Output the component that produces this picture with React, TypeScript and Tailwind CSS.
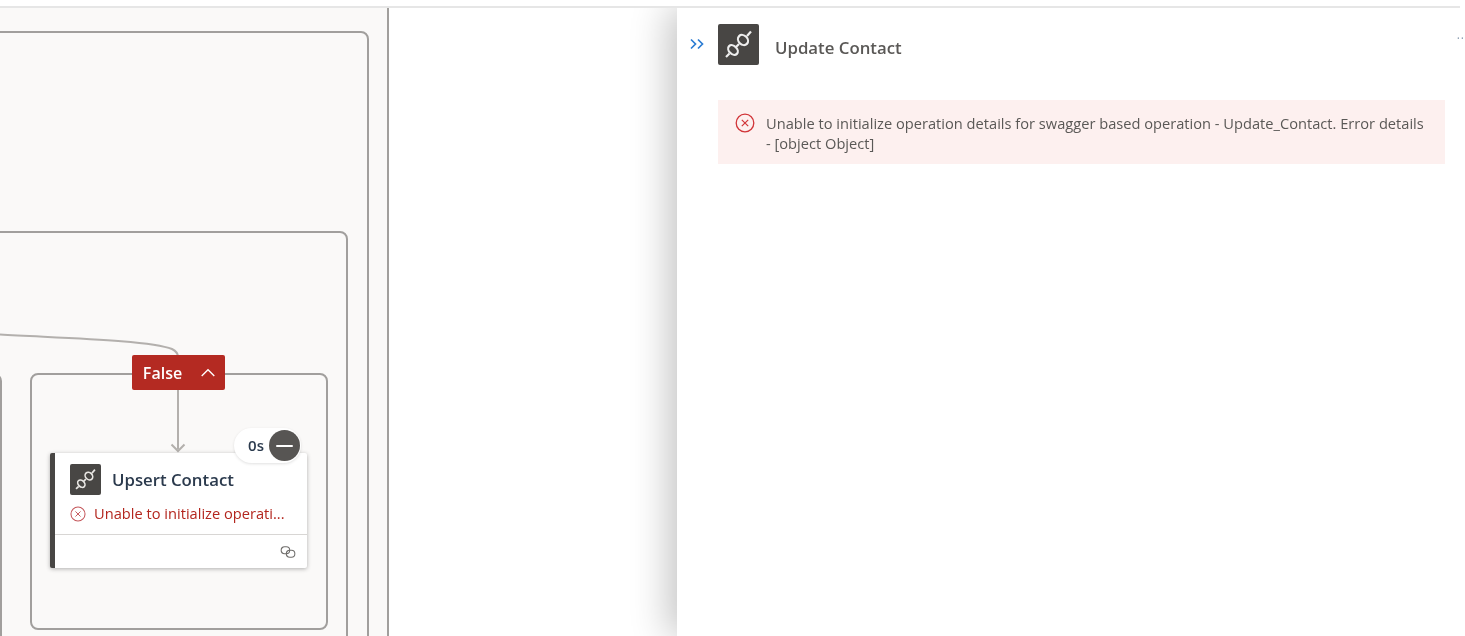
const font = "[font-family:'Open_Sans','Noto_Sans',sans-serif]"

function PlugIcon({ className }: { className: string }) {
  return (
    <svg viewBox="0 0 41 41" fill="none" stroke="currentColor" strokeWidth="2.2" className={className}>
      <path d="M8 33l3.500-3.500" />
      <ellipse cx="15" cy="26" rx="4" ry="5.500" transform="rotate(-45 15 26)" />
      <path d="M18 23l3-3" />
      <ellipse cx="25" cy="16" rx="4.500" ry="5.500" transform="rotate(-45 25 16)" />
      <path d="M29 12l4-4.500" />
    </svg>
  )
}

function ErrorIcon({ className }: { className: string }) {
  return (
    <svg viewBox="0 0 20 20" fill="none" stroke="currentColor" className={className}>
      <circle cx="10" cy="10" r="8.8" strokeWidth="1.3" />
      <path d="M6.8 6.8l6.4 6.4M13.2 6.8l-6.4 6.4" strokeWidth="1.2" />
    </svg>
  )
}

function Canvas() {
  return (
    <div className="relative h-full w-[389px] shrink-0 overflow-hidden border-r-2 border-[#a19f9d] bg-[#faf9f8]">
      {/* nested scope boxes run off the canvas */}
      <div className="absolute left-[-40px] top-[23px] h-[700px] w-[409px] rounded-lg border-2 border-[#a19f9d]" />
      <div className="absolute left-[-40px] top-[223px] h-[500px] w-[388px] rounded-lg border-2 border-[#a19f9d]" />
      <div className="absolute left-[-300px] top-[365px] h-[300px] w-[302px] rounded-lg border-2 border-[#a19f9d]" />
      <div className="absolute left-[30px] top-[365px] h-[257px] w-[298px] rounded-lg border-2 border-[#a19f9d]" />

      <svg className="absolute left-0 top-[319px] h-[130px] w-[200px]" viewBox="0 0 200 130" fill="none" stroke="#b3b0ad" strokeWidth="2">
        <path d="M0 7.5C60 11 150 13 172 22Q178 25 178 30V122" />
        <path d="M171.5 117.5l6.5 6.5 6.5-6.5" />
      </svg>

      <div className="absolute left-[132px] top-[347px] flex h-[35px] w-[93px] items-center justify-center gap-[18px] rounded-[2px] bg-[#b42a22] pl-[2px] text-[16px] font-semibold text-white">
        False
        <svg viewBox="0 0 16 10" fill="none" stroke="currentColor" strokeWidth="1.5" className="h-[9px] w-[16px]">
          <path d="M1 9l7-7 7 7" />
        </svg>
      </div>

      <div className="absolute left-[50px] top-[445px] w-[257px] rounded-[2px] border-l-[5px] border-[#484644] bg-white shadow-[0_1px_4px_rgba(0,0,0,0.3)]">
        <div className="flex items-center gap-[11px] pl-[15px] pt-[11px]">
          <div className="flex h-[31px] w-[31px] items-center justify-center rounded-[2px] bg-[#484644] text-[#e8e6e3]">
            <PlugIcon className="h-[31px] w-[31px]" />
          </div>
          <span className="text-[16.8px] font-semibold text-[#2b3a4d]">Upsert Contact</span>
        </div>
        <div className="flex h-[40px] items-center gap-[8px] border-b border-[#d8d6d4] pb-[2px] pl-[15px] text-[14.65px] text-[#b3261e]">
          <ErrorIcon className="h-[16px] w-[16px] shrink-0 text-[#c4565a]" />
          Unable to initialize operati...
        </div>
        <div className="flex h-[33px] items-center justify-end pr-[11px] text-[#6e6c6a]">
          <svg viewBox="0 0 18 14" fill="none" stroke="currentColor" strokeWidth="1.2" className="h-[12px] w-[16px]">
            <rect x="1" y="1" width="10" height="8" rx="4" />
            <rect x="7" y="5" width="10" height="8" rx="4" />
          </svg>
        </div>
      </div>

      <div className="absolute left-[234px] top-[420px] flex h-[35px] w-[67px] items-center justify-end rounded-full bg-white pr-[1px] shadow-[0_1px_3px_rgba(0,0,0,0.12)]">
        <span className="mr-[5px] text-[15px] font-semibold text-[#2b3a4d]">0s</span>
        <div className="flex h-[31px] w-[31px] items-center justify-center rounded-full bg-[#575553]">
          <div className="h-[2px] w-[17px] rounded-full bg-white" />
        </div>
      </div>
    </div>
  )
}

function DetailsPanel() {
  return (
    <div className="relative flex-1 bg-white pr-[20px] shadow-[-8px_0_36px_rgba(0,0,0,0.24)]">
      <div className="flex h-[57px] items-center pl-[12px] pt-[16px]">
        <svg viewBox="0 0 16 12" fill="none" stroke="#2b7cd3" strokeWidth="1.7" className="mt-[-1px] h-[12px] w-[17px]">
          <path d="M1.5 1.5l4.5 4.5-4.500 4.500M8.500 1.500l4.500 4.500-4.500 4.500" />
        </svg>
        <div className="ml-[12px] flex h-[41px] w-[41px] items-center justify-center rounded-[2px] bg-[#484644] text-[#eeeeee]">
          <PlugIcon className="h-[41px] w-[41px]" />
        </div>
        <span className="ml-[16px] mt-[7px] text-[16.8px] font-semibold text-[#5a5856]">Update Contact</span>
        <span className="absolute right-0 top-[25px] text-[12px] leading-none tracking-[1px] text-[#8a9bb0]">··</span>
      </div>
      <div className="ml-[41px] mt-[35px] flex h-[64px] gap-[11px] bg-[#fdf0ef] pl-[17px] pr-[20px] pt-[13px] text-[14.65px] leading-[20px] text-[#5a5856]">
        <ErrorIcon className="h-[20px] w-[20px] shrink-0 text-[#d13438]" />
        <p>Unable to initialize operation details for swagger based operation - Update_Contact. Error details - [object Object]</p>
      </div>
    </div>
  )
}

export default function App() {
  return (
    <div className={`flex h-[636px] w-[1465px] flex-col overflow-hidden bg-white blur-[0.7px] ${font}`}>
      <div className="relative z-10 h-[8px] shrink-0 bg-white">
        <div className="mr-[5px] h-[8px] border-b-2 border-[#e6e6e6]" />
      </div>
      <div className="flex min-h-0 flex-1">
        <Canvas />
        <div className="w-[288px] shrink-0 bg-white" />
        <DetailsPanel />
      </div>
    </div>
  )
}
